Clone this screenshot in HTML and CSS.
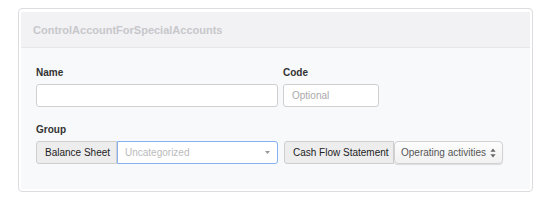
FILE: index.html
```html
<!DOCTYPE html>
<html>

<head>
    <title>Account</title>
    <link rel="stylesheet" href="styles.css">
</head>

<body>
    <div class="panel">
        <div class="panel-heading">ControlAccountForSpecialAccounts</div>

        <div class="panel-body">
            <div class="form-row">
                <div class="form-group name-group">
                    <label for="name">Name</label>
                    <input type="text" id="name">
                </div>
                <div class="form-group code-group">
                    <label for="code">Code</label>
                    <input type="text" id="code" placeholder="Optional">
                </div>
            </div>

            <div class="form-group group-section">
                <label>Group</label>
                <div class="group-row">
                    <div class="input-group balance-group">
                        <span class="addon">Balance Sheet</span>
                        <div class="select-box">
                            <span class="placeholder">Uncategorized</span>
                            <svg class="caret" width="5" height="3" viewBox="0 0 5 3">
                                <path d="M0 0 L5 0 L2.5 3 Z" fill="#999"/>
                            </svg>
                        </div>
                    </div>
                    <div class="input-group cash-group">
                        <span class="addon">Cash Flow Statement</span>
                        <div class="native-select">
                            <span>Operating activities</span>
                            <svg class="updown" width="6" height="10" viewBox="0 0 6 10">
                                <path d="M3 0.5 L5.6 3.8 L0.4 3.8 Z" fill="#666"/>
                                <path d="M3 9.5 L5.6 6.2 L0.4 6.2 Z" fill="#666"/>
                            </svg>
                        </div>
                    </div>
                </div>
            </div>
        </div>
    </div>
</body>

</html>
```

FILE: styles.css
```css
:root {
    --text-color: #333;
    --muted: #aaa;
    --border-color: #cfcfcf;
    --addon-bg: #ededee;
    --heading-bg: #f2f2f4;
    --body-bg: #f8f9fb;
    --focus: #86b1ef;
}

* {
    box-sizing: border-box;
    margin: 0;
    padding: 0;
}

body {
    padding: 8px 0 0 18px;
    font-family: "Liberation Sans", Arial, Helvetica, sans-serif;
    font-size: 10px;
    color: var(--text-color);
    background: #fff;
}

.panel {
    width: 515px;
    padding: 3px 2px 2px;
    border: 1px solid #dcdcde;
    border-radius: 4px;
    background: #fff;
}

.panel-heading {
    height: 36px;
    padding-left: 12px;
    display: flex;
    align-items: center;
    background: var(--heading-bg);
    border-bottom: 1px solid #e7e7ea;
    color: #c7c7cb;
    font-size: 11px;
    font-weight: bold;
}

.panel-body {
    padding: 19px 15px 25px;
    background: var(--body-bg);
}

.form-row {
    display: flex;
    gap: 5px;
}

.name-group {
    width: 242px;
}

.code-group {
    width: 96px;
}

label {
    display: block;
    margin-bottom: 5px;
    line-height: 12px;
    font-weight: bold;
    color: var(--text-color);
}

input[type="text"] {
    display: block;
    width: 100%;
    height: 23px;
    padding: 0 8px;
    border: 1px solid var(--border-color);
    border-radius: 3px;
    background: #fff;
    font-family: inherit;
    font-size: 10px;
    color: var(--text-color);
}

input::placeholder {
    color: var(--muted);
}

.group-section {
    margin-top: 17px;
}

.group-row {
    display: flex;
    gap: 6px;
}

.input-group {
    display: flex;
    height: 23px;
}

.balance-group {
    width: 242px;
}

.cash-group {
    width: 219px;
}

.addon {
    display: flex;
    align-items: center;
    padding: 0 8px;
    background: var(--addon-bg);
    border: 1px solid var(--border-color);
    border-radius: 3px 0 0 3px;
    color: #222;
    white-space: nowrap;
}

.balance-group .addon {
    width: 81px;
}

.cash-group .addon {
    width: 110px;
}

.select-box {
    flex: 1;
    display: flex;
    align-items: center;
    justify-content: space-between;
    padding: 0 7px 0 7px;
    background: #fff;
    border: 1px solid var(--focus);
    border-radius: 0 3px 3px 0;
}

.placeholder {
    color: #bbb;
}

.native-select {
    flex: 1;
    display: flex;
    align-items: center;
    justify-content: space-between;
    padding: 0 6px 0 6px;
    background: linear-gradient(#fdfdfd, #f1f1f2);
    border: 1px solid #d2d2d4;
    border-radius: 4px;
    box-shadow: 0 1px 1px rgba(0, 0, 0, 0.12);
    color: #555;
    white-space: nowrap;
}
```
